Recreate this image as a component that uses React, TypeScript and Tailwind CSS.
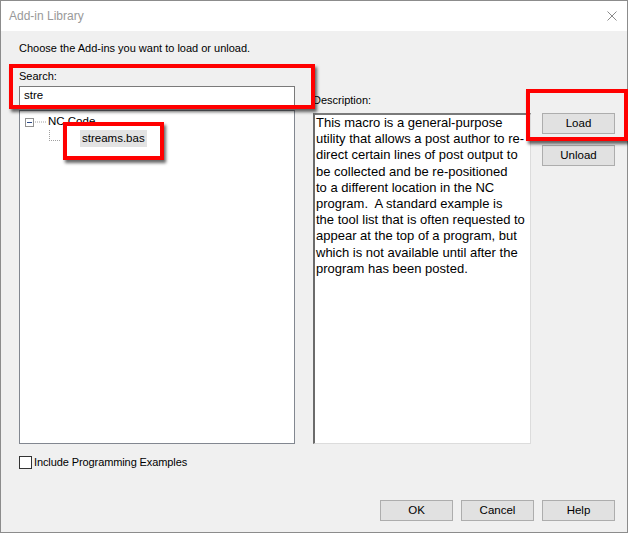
import React from "react";

const descLines = [
  "This macro is a general-purpose",
  "utility that allows a post author to re-",
  "direct certain lines of post output to",
  "be collected and be re-positioned",
  "to a different location in the NC",
  "program.  A standard example is",
  "the tool list that is often requested to",
  "appear at the top of a program, but",
  "which is not available until after the",
  "program has been posted.",
];

function Btn({ label, className = "" }: { label: string; className?: string }) {
  return (
    <div
      className={
        "w-[73px] h-[21px] bg-[#e1e1e1] border border-[#adadad] flex items-center justify-center text-[11.5px] text-black " +
        className
      }
    >
      {label}
    </div>
  );
}

export default function App() {
  return (
    <div className="relative w-[628px] h-[534px] bg-white overflow-hidden font-['Liberation_Sans',Arial,sans-serif]">
      <div className="w-[628px] h-[533px] border border-[#8c8c8c] bg-[#f0f0f0] flex flex-col">
        {/* title bar */}
        <div className="h-[30px] bg-white flex items-center pl-[8px] pr-[10px] shrink-0">
          <span className="text-[12px] text-[#999999]">Add-in Library</span>
          <div className="ml-auto w-[10px] h-[10px]">
            <svg width="10" height="10" viewBox="0 0 10 10">
              <path d="M0.5 0.5 L9.5 9.5 M9.5 0.5 L0.5 9.5" stroke="#8a8a8a" strokeWidth="1" fill="none" />
            </svg>
          </div>
        </div>

        {/* body */}
        <div className="flex flex-col pl-[18px] pr-[12px]">
          <div className="mt-[9px] h-[16px] leading-[16px] text-[11px] text-black">
            Choose the Add-ins you want to load or unload.
          </div>

          <div className="flex">
            {/* left column */}
            <div className="w-[276px] flex flex-col">
              <div className="mt-[12px] h-[16px] leading-[16px] text-[11px] text-black">Search:</div>
              <div className="mt-[2px] h-[20px] border border-[#7a7a7a] bg-white flex items-center pl-[4px] text-[11.5px] text-black">
                stre
              </div>
              <div className="mt-[4px] h-[334px] border border-[#828790] bg-white pt-[3px] pl-[5px]">
                <div className="flex items-center h-[16px]">
                  <div className="w-[9px] h-[9px] border border-[#919191] flex items-center justify-center">
                    <div className="w-[5px] h-[1px] bg-[#2d4a87]" />
                  </div>
                  <svg width="12" height="2" className="ml-[1px]">
                    <line x1="0" y1="1" x2="12" y2="1" stroke="#a0a0a0" strokeDasharray="1 1" />
                  </svg>
                  <span className="ml-[1px] text-[11.5px] text-black">NC Code</span>
                </div>
                <div className="flex items-start h-[18px]">
                  <svg width="55" height="12" className="shrink-0">
                    <line x1="24.5" y1="0" x2="24.5" y2="10" stroke="#a0a0a0" strokeDasharray="1 1" />
                    <line x1="24" y1="10.5" x2="36" y2="10.5" stroke="#a0a0a0" strokeDasharray="1 1" />
                  </svg>
                  <span className="h-[17px] leading-[17px] bg-[#e3e3e3] px-[2px] text-[11.5px] text-black">
                    streams.bas
                  </span>
                </div>
              </div>
            </div>

            {/* middle column */}
            <div className="ml-[18px] w-[218px] flex flex-col">
              <div className="mt-[36px] h-[16px] leading-[16px] text-[11px] text-black">Description:</div>
              <div className="mt-[5px] h-[331px] bg-white border-t-2 border-l-2 border-r border-b border-t-[#7a7a7a] border-l-[#6b6b6b] border-r-[#dcdcdc] border-b-[#dcdcdc] pl-[1px] text-[13px] leading-[16.2px] text-black">
                {descLines.map((l, i) => (
                  <div key={i} className="whitespace-pre">
                    {l}
                  </div>
                ))}
              </div>
            </div>

            {/* right column */}
            <div className="ml-[11px] flex flex-col">
              <Btn label="Load" className="mt-[57px]" />
              <Btn label="Unload" className="mt-[11px]" />
            </div>
          </div>

          <div className="mt-[10px] h-[16px] flex items-center">
            <div className="w-[13px] h-[13px] border border-[#333333] bg-white" />
            <span className="ml-[2px] text-[11px] tracking-[-0.1px] text-black">Include Programming Examples</span>
          </div>

          <div className="mt-[30px] flex justify-end gap-[8px]">
            <Btn label="OK" />
            <Btn label="Cancel" />
            <Btn label="Help" />
          </div>
        </div>
      </div>

      {/* red annotation boxes */}
      <div className="absolute left-[9px] top-[64px] w-[306px] h-[45px] border-4 border-[#ff0000] shadow-[2px_3px_3px_rgba(0,0,0,0.6)]" />
      <div className="absolute left-[63px] top-[122px] w-[101px] h-[38px] border-4 border-[#ff0000] shadow-[2px_3px_3px_rgba(0,0,0,0.6)]" />
      <div className="absolute left-[526px] top-[89px] w-[102px] h-[52px] border-4 border-[#ff0000] shadow-[2px_3px_3px_rgba(0,0,0,0.6)]" />
    </div>
  );
}
